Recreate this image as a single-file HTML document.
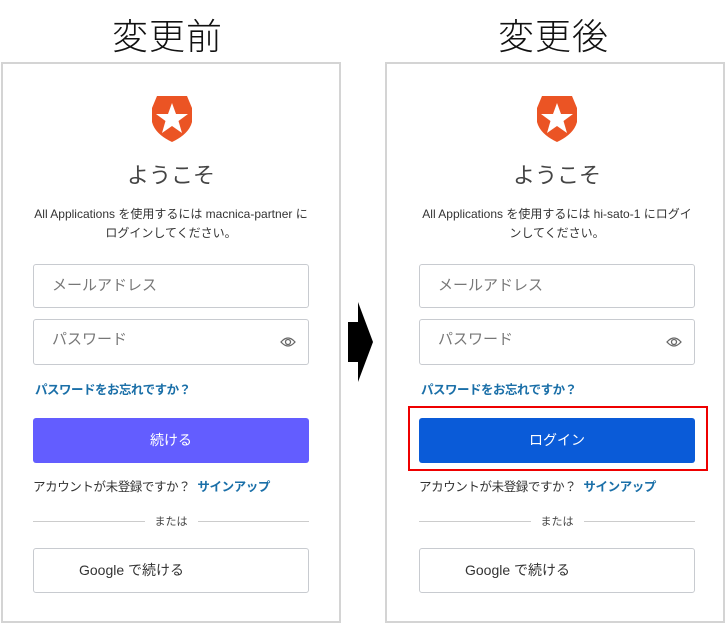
<!DOCTYPE html>
<html><head><meta charset="utf-8"><style>
body{margin:0;width:727px;height:622px;background:#fff;position:relative;overflow:hidden;font-family:"Liberation Sans","Noto Sans CJK JP",sans-serif;}
.t{position:absolute;font-size:36px;color:#111;top:8px;font-family:"Noto Sans CJK JP",sans-serif;font-weight:300;letter-spacing:1px}
.p{position:absolute;top:62px;width:336px;height:557px;border:2px solid #d4d4d4;box-sizing:content-box}
.p>*{position:absolute}
.logo{left:148px;top:32px}
.wel{left:0;width:336px;text-align:center;top:94px;font-size:22px;color:#444}
.desc{left:20px;width:296px;text-align:center;top:141px;font-size:12px;line-height:19px;color:#333}
.in{left:30px;width:276px;border:1px solid #c8cbd0;border-radius:3px;font-size:15px;color:#777;padding-left:18px;box-sizing:border-box}
.link{left:32px;top:315px;font-size:12.5px;font-weight:bold;color:#1a6fa8;letter-spacing:-0.5px}
.btn{left:30px;width:276px;top:354px;height:45px;border-radius:3px;color:#fff;font-size:14px;text-align:center;line-height:45px}
.su{left:30px;top:412px;font-size:12.5px;color:#333;letter-spacing:-0.4px}
.su b{color:#1a6fa8;margin-left:4px}
.hr{top:457px;height:1px;background:#ccc}
.or{left:0;width:336px;text-align:center;top:449px;font-size:11px;color:#444}
.g{left:30px;width:276px;top:484px;height:45px;border:1px solid #c8cbd0;border-radius:3px;box-sizing:border-box;font-size:14px;color:#333;line-height:43px;padding-left:45px}
</style></head><body>
<div class="t" style="left:112px">変更前</div>
<div class="t" style="left:498px">変更後</div>

<svg style="position:absolute;left:348px;top:302px" width="26" height="81"><polygon points="0,20 10,20 10,0 25,40 10,80 10,60 0,60" fill="#000"/></svg>

<div class="p" style="left:1px">
<svg class="logo" width="42" height="46" viewBox="0 0 42 46"><path d="M6 0H36L41 12V26Q38 38 21 46Q4 38 1 26V12Z" fill="#eb5424"/><polygon points="21,7 25,18 37,18 27.5,25 31,37 21,30 11,37 14.5,25 5,18 17,18" fill="#fff"/></svg>
<div class="wel">ようこそ</div>
<div class="desc">All Applications を使用するには macnica-partner に<br>ログインしてください。</div>
<div class="in" style="top:200px;height:44px;line-height:42px">メールアドレス</div>
<div class="in" style="top:255px;height:46px;line-height:40px">パスワード<svg style="position:absolute;right:12px;top:16px" width="16" height="12" viewBox="0 0 16 12"><path d="M1 6Q8 -2 15 6Q8 14 1 6Z" fill="none" stroke="#666" stroke-width="1.3"/><circle cx="8" cy="6" r="2.5" fill="none" stroke="#666" stroke-width="1.3"/></svg></div>
<div class="link">パスワードをお忘れですか？</div>
<div class="btn" style="background:#635dff">続ける</div>
<div class="su">アカウントが未登録ですか？ <b>サインアップ</b></div>
<div class="hr" style="left:30px;width:112px"></div><div class="hr" style="left:195px;width:111px"></div>
<div class="or">または</div>
<div class="g">Google で続ける</div>
</div>

<div class="p" style="left:385px">
<svg class="logo" width="42" height="46" viewBox="0 0 42 46" style="left:149px"><path d="M6 0H36L41 12V26Q38 38 21 46Q4 38 1 26V12Z" fill="#eb5424"/><polygon points="21,7 25,18 37,18 27.5,25 31,37 21,30 11,37 14.5,25 5,18 17,18" fill="#fff"/></svg>
<div class="wel" style="left:2px">ようこそ</div>
<div class="desc" style="left:22px">All Applications を使用するには hi-sato-1 にログイ<br>ンしてください。</div>
<div class="in" style="left:32px;top:200px;height:44px;line-height:42px">メールアドレス</div>
<div class="in" style="left:32px;top:255px;height:46px;line-height:40px">パスワード<svg style="position:absolute;right:12px;top:16px" width="16" height="12" viewBox="0 0 16 12"><path d="M1 6Q8 -2 15 6Q8 14 1 6Z" fill="none" stroke="#666" stroke-width="1.3"/><circle cx="8" cy="6" r="2.5" fill="none" stroke="#666" stroke-width="1.3"/></svg></div>
<div class="link" style="left:34px">パスワードをお忘れですか？</div>
<div class="btn" style="left:32px;background:#0a5bd8">ログイン</div>
<div class="su" style="left:32px">アカウントが未登録ですか？ <b>サインアップ</b></div>
<div class="hr" style="left:32px;width:112px"></div><div class="hr" style="left:197px;width:111px"></div>
<div class="or" style="left:2px">または</div>
<div class="g" style="left:32px">Google で続ける</div>
</div>
<div style="position:absolute;left:408px;top:406px;width:296px;height:61px;border:2px solid #e00"></div>
</body></html>
